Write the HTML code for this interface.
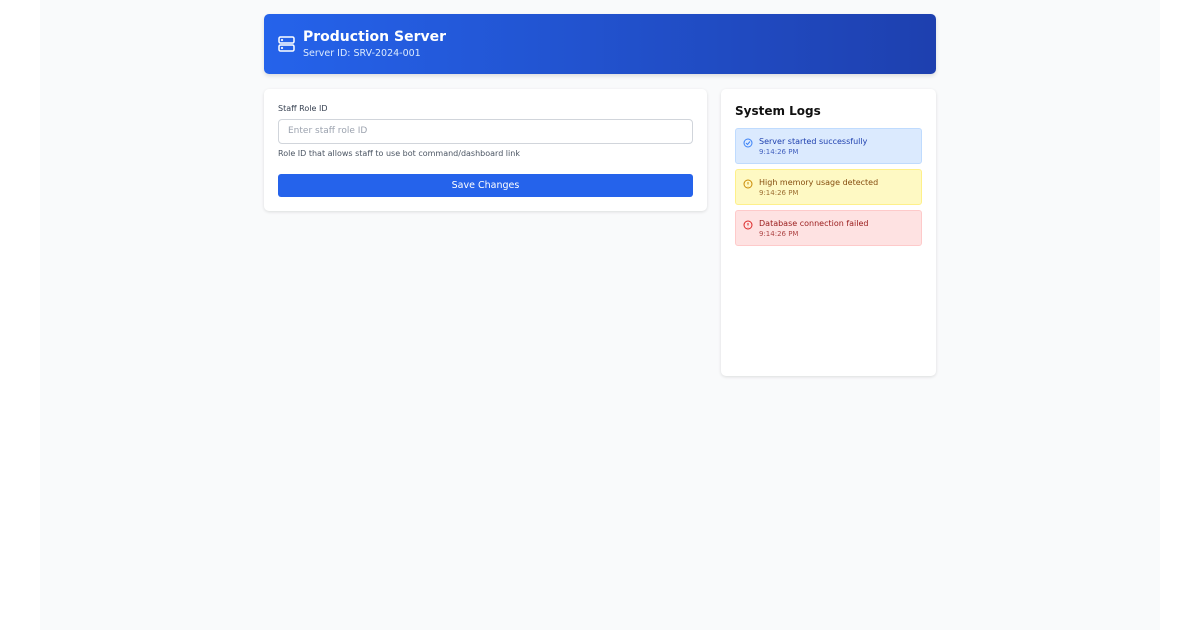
<!DOCTYPE html>
<html><head><style>
*{box-sizing:border-box;margin:0;padding:0}
body{width:1200px;height:630px;background:#fff;font-family:"DejaVu Sans","Liberation Sans",sans-serif;position:relative;overflow:hidden}
.bg{position:absolute;left:40px;top:0;width:1120px;height:630px;background:#f9fafb}
.hdr{position:absolute;left:264px;top:14px;width:672px;height:60px;border-radius:5px;background:linear-gradient(90deg,#2563eb,#1e40af);box-shadow:0 2px 4px rgba(0,0,0,.12);color:#fff}
.hdr h1{position:absolute;left:39px;top:15px;font-size:14px;font-weight:bold}
.hdr p{position:absolute;left:39px;top:34px;font-size:9.5px;color:#dbeafe}
.card{position:absolute;background:#fff;border-radius:5px;box-shadow:0 1px 3px rgba(0,0,0,.12)}
.l{left:264px;top:89px;width:443px;height:122px}
.r{left:721px;top:89px;width:215px;height:287px}
.lbl{position:absolute;left:14px;top:15px;font-size:8px;color:#374151}
.inp{position:absolute;left:14px;top:30px;width:415px;height:25px;border:1px solid #d1d5db;border-radius:4px;font-size:9px;color:#9ca3af;padding:6px 9px}
.hint{position:absolute;left:14px;top:60px;font-size:8px;color:#4b5563}
.btn{position:absolute;left:14px;top:85px;width:415px;height:23px;background:#2563eb;border-radius:3px;color:#fff;font-size:9.5px;text-align:center;line-height:23px}
.r h2{position:absolute;left:14px;top:15px;font-size:12px;font-weight:bold;color:#111}
.log{position:absolute;left:14px;width:187px;height:36px;border-radius:3px;border:1px solid}
.log .t{position:absolute;left:23px;top:8px;font-size:8px}
.log .s{position:absolute;left:23px;top:19px;font-size:7px;opacity:.8}
.log svg{position:absolute;left:7px;top:9px}
</style></head><body>
<div class="bg"></div>
<div class="hdr">
<svg style="position:absolute;left:14px;top:22px" width="18" height="16" viewBox="0 0 18 16" fill="none" stroke="#fff" stroke-width="1.5"><rect x="1" y="1" width="15" height="6" rx="1.5"/><rect x="1" y="9" width="15" height="6" rx="1.5"/><circle cx="4" cy="4" r=".4"/><circle cx="4" cy="12" r=".4"/></svg>
<h1>Production Server</h1><p>Server ID: SRV-2024-001</p></div>
<div class="card l"><div class="lbl">Staff Role ID</div><div class="inp">Enter staff role ID</div><div class="hint">Role ID that allows staff to use bot command/dashboard link</div><div class="btn">Save Changes</div></div>
<div class="card r"><h2>System Logs</h2>
<div class="log" style="top:39px;background:#dbeafe;border-color:#bfdbfe;color:#1e40af"><svg width="10" height="10" viewBox="0 0 10 10" fill="none" stroke="#3b82f6" stroke-width="1"><circle cx="5" cy="5" r="4"/><path d="M3 5l1.5 1.5L7 3.5"/></svg><div class="t">Server started successfully</div><div class="s">9:14:26 PM</div></div>
<div class="log" style="top:80px;background:#fef9c3;border-color:#fef08a;color:#854d0e"><svg width="10" height="10" viewBox="0 0 10 10" fill="none" stroke="#ca8a04" stroke-width="1"><circle cx="5" cy="5" r="4"/><path d="M5 3v2.5M5 7v.3"/></svg><div class="t">High memory usage detected</div><div class="s">9:14:26 PM</div></div>
<div class="log" style="top:121px;background:#fee2e2;border-color:#fecaca;color:#991b1b"><svg width="10" height="10" viewBox="0 0 10 10" fill="none" stroke="#dc2626" stroke-width="1"><circle cx="5" cy="5" r="4"/><path d="M5 3v2.5M5 7v.3"/></svg><div class="t">Database connection failed</div><div class="s">9:14:26 PM</div></div>
</div>
</body></html>
